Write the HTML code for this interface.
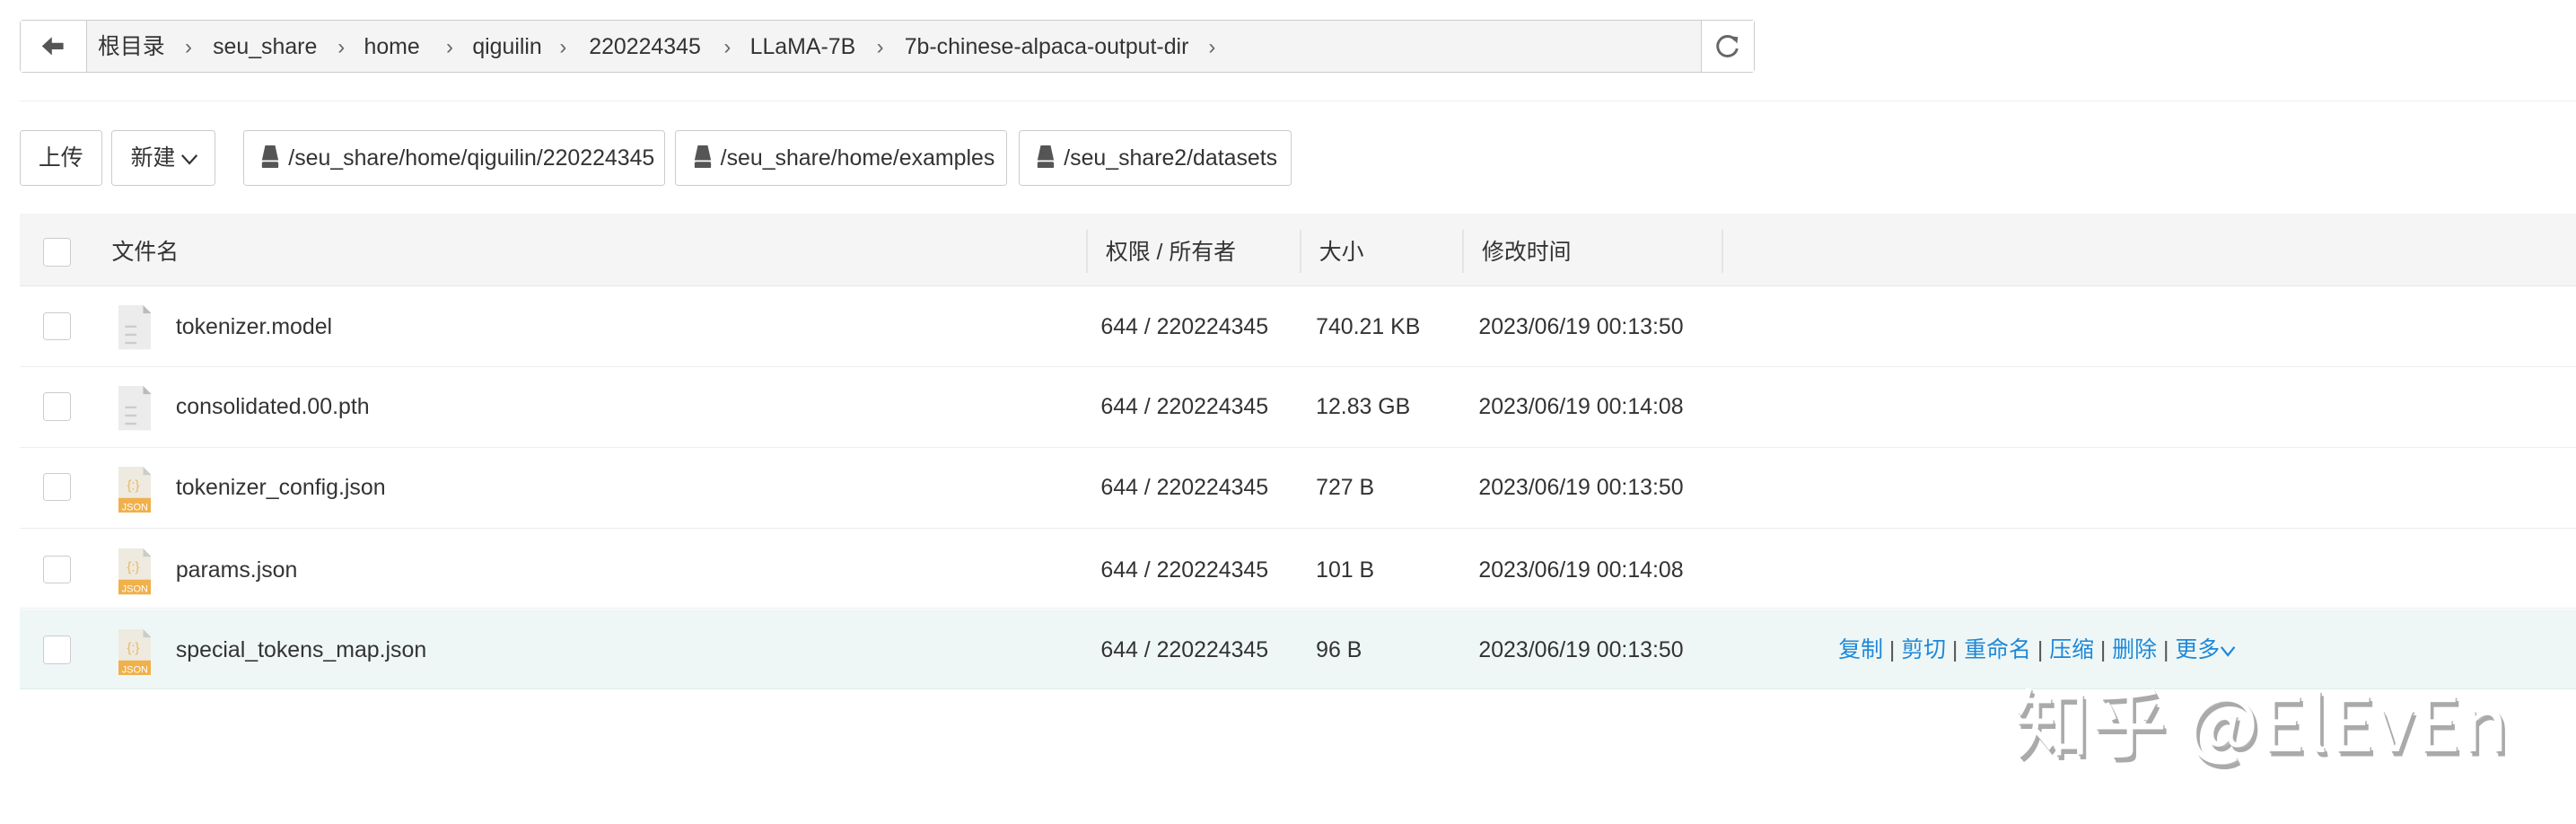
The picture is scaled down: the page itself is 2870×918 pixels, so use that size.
<!DOCTYPE html>
<html><head><meta charset="utf-8"><style>
html,body{margin:0;padding:0;background:#fff;overflow:hidden}
body{width:2870px;height:918px}
#w{zoom:1.8304;width:1568px;height:502px;position:relative;font-family:"Liberation Sans","Noto Sans CJK SC",sans-serif;color:#333;font-size:13.6px;line-height:16px}
.a{position:absolute}
.bc{left:12px;top:12px;width:1055px;height:31px;border:1px solid #ccc;background:#f4f4f4;border-radius:2px}
.bc span{position:absolute;top:8px;white-space:nowrap}
.gt{color:#666;font-size:13px}
.btn{top:79px;height:33px;border:1px solid #ccc;border-radius:2px;background:#fff;line-height:33px;white-space:nowrap}
.hd{left:12px;top:130px;width:1556px;height:44px;background:#f5f5f5;border-bottom:1px solid #e6e6e6}
.cb{width:16px;height:16px;border:1px solid #ccc;border-radius:2px;background:#fff}
.dv{top:140px;width:1px;height:26px;background:#e4e4e4}
.row{left:12px;width:1556px;height:48px;border-bottom:1px solid #eee}
</style></head><body><div id="w">
<div class="a bc">
 <div class="a" style="left:0;top:0;width:40px;height:31px;background:#fff;border-right:1px solid #ccc">
  <svg width="40" height="31"><path d="M13 15.5 L19 10 V13.5 H26 V17.5 H19 V21 Z" fill="#555"/></svg></div>
 <span style="left:47px">根目录</span><span class="gt" style="left:100px">›</span>
 <span style="left:117px">seu_share</span><span class="gt" style="left:193px">›</span>
 <span style="left:209px">home</span><span class="gt" style="left:259px">›</span>
 <span style="left:275px">qiguilin</span><span class="gt" style="left:328px">›</span>
 <span style="left:346px">220224345</span><span class="gt" style="left:428px">›</span>
 <span style="left:444px">LLaMA-7B</span><span class="gt" style="left:521px">›</span>
 <span style="left:538px">7b-chinese-alpaca-output-dir</span><span class="gt" style="left:723px">›</span>
 <div class="a" style="left:1023px;top:0;width:32px;height:31px;background:#fff;border-left:1px solid #ccc;box-sizing:border-box">
  <svg width="32" height="31"><path d="M20.5 12 A6 6 0 1 0 21.5 17" fill="none" stroke="#666" stroke-width="1.6"/><path d="M18 9.5 L22 10 L21.5 14 Z" fill="#666"/></svg></div>
</div>
<div class="a" style="left:12px;top:61px;width:1556px;height:1px;background:#eee"></div>
<div class="a btn" style="left:12px;width:49px;text-align:center">上传</div>
<div class="a btn" style="left:68px;width:62px"><span style="margin-left:11px">新建</span><svg width="11" height="7" style="margin-left:3px"><path d="M1 1 L5.5 6 L10 1" fill="none" stroke="#333" stroke-width="1.2"/></svg></div>
<div class="a btn" style="left:148px;width:256px"><svg width="12" height="14" style="margin:0 5px 0 10px;vertical-align:-2px"><path d="M3 0 H9 L11 9 H1 Z" fill="#555"/><rect x="1" y="10" width="10" height="4" rx="1" fill="#555"/></svg>/seu_share/home/qiguilin/220224345</div>
<div class="a btn" style="left:411px;width:201px"><svg width="12" height="14" style="margin:0 5px 0 10px;vertical-align:-2px"><path d="M3 0 H9 L11 9 H1 Z" fill="#555"/><rect x="1" y="10" width="10" height="4" rx="1" fill="#555"/></svg>/seu_share/home/examples</div>
<div class="a btn" style="left:620px;width:165px"><svg width="12" height="14" style="margin:0 5px 0 10px;vertical-align:-2px"><path d="M3 0 H9 L11 9 H1 Z" fill="#555"/><rect x="1" y="10" width="10" height="4" rx="1" fill="#555"/></svg>/seu_share2/datasets</div>
<div class="a hd"></div>
<div class="a cb" style="left:26px;top:145px"></div>
<div class="a" style="left:68px;top:146px">文件名</div>
<div class="a dv" style="left:661px"></div><div class="a" style="left:673px;top:146px">权限 / 所有者</div>
<div class="a dv" style="left:791px"></div><div class="a" style="left:803px;top:146px">大小</div>
<div class="a dv" style="left:890px"></div><div class="a" style="left:902px;top:146px">修改时间</div>
<div class="a dv" style="left:1048px"></div>

<div class="a row" style="top:175px"></div>
<div class="a row" style="top:224px"></div>
<div class="a row" style="top:273px"></div>
<div class="a row" style="top:322px"></div>
<div class="a row" style="top:371px;background:#eef7f6;border-bottom-color:#e0ecea"></div>

<div class="a cb" style="left:26px;top:190px"></div><div class="a cb" style="left:26px;top:239px"></div><div class="a cb" style="left:26px;top:288px"></div><div class="a cb" style="left:26px;top:338px"></div><div class="a cb" style="left:26px;top:387px"></div>

<svg class="a" style="left:72px;top:186px" width="20" height="27"><path d="M0 0 H15 L20 5 V27 H0 Z" fill="#ececec"/><path d="M15 0 L20 5 H15 Z" fill="#bbb"/><path d="M4 13 H11 M4 18 H11 M4 23 H11" stroke="#ccc" stroke-width="1.3"/></svg>
<svg class="a" style="left:72px;top:235px" width="20" height="27"><path d="M0 0 H15 L20 5 V27 H0 Z" fill="#ececec"/><path d="M15 0 L20 5 H15 Z" fill="#bbb"/><path d="M4 13 H11 M4 18 H11 M4 23 H11" stroke="#ccc" stroke-width="1.3"/></svg>
<svg class="a" style="left:72px;top:284px" width="20" height="28"><path d="M0 0 H15 L20 5 V28 H0 Z" fill="#eeeae0"/><path d="M15 0 L20 5 H15 Z" fill="#ccc"/><text x="9" y="14" font-size="8" fill="#e8b860" text-anchor="middle" font-family="Liberation Sans">{:}</text><rect x="0" y="19" width="20" height="9" fill="#f0b04a"/><text x="10" y="26.5" font-size="6" fill="#fff" text-anchor="middle" font-family="Liberation Sans">JSON</text></svg>
<svg class="a" style="left:72px;top:334px" width="20" height="28"><path d="M0 0 H15 L20 5 V28 H0 Z" fill="#eeeae0"/><path d="M15 0 L20 5 H15 Z" fill="#ccc"/><text x="9" y="14" font-size="8" fill="#e8b860" text-anchor="middle" font-family="Liberation Sans">{:}</text><rect x="0" y="19" width="20" height="9" fill="#f0b04a"/><text x="10" y="26.5" font-size="6" fill="#fff" text-anchor="middle" font-family="Liberation Sans">JSON</text></svg>
<svg class="a" style="left:72px;top:383px" width="20" height="28"><path d="M0 0 H15 L20 5 V28 H0 Z" fill="#eeeae0"/><path d="M15 0 L20 5 H15 Z" fill="#ccc"/><text x="9" y="14" font-size="8" fill="#e8b860" text-anchor="middle" font-family="Liberation Sans">{:}</text><rect x="0" y="19" width="20" height="9" fill="#f0b04a"/><text x="10" y="26.5" font-size="6" fill="#fff" text-anchor="middle" font-family="Liberation Sans">JSON</text></svg>

<div class="a" style="left:107px;top:191px">tokenizer.model</div><div class="a" style="left:670px;top:191px">644 / 220224345</div><div class="a" style="left:801px;top:191px">740.21 KB</div><div class="a" style="left:900px;top:191px">2023/06/19 00:13:50</div>
<div class="a" style="left:107px;top:240px">consolidated.00.pth</div><div class="a" style="left:670px;top:240px">644 / 220224345</div><div class="a" style="left:801px;top:240px">12.83 GB</div><div class="a" style="left:900px;top:240px">2023/06/19 00:14:08</div>
<div class="a" style="left:107px;top:289px">tokenizer_config.json</div><div class="a" style="left:670px;top:289px">644 / 220224345</div><div class="a" style="left:801px;top:289px">727 B</div><div class="a" style="left:900px;top:289px">2023/06/19 00:13:50</div>
<div class="a" style="left:107px;top:339px">params.json</div><div class="a" style="left:670px;top:339px">644 / 220224345</div><div class="a" style="left:801px;top:339px">101 B</div><div class="a" style="left:900px;top:339px">2023/06/19 00:14:08</div>
<div class="a" style="left:107px;top:388px">special_tokens_map.json</div><div class="a" style="left:670px;top:388px">644 / 220224345</div><div class="a" style="left:801px;top:388px">96 B</div><div class="a" style="left:900px;top:388px">2023/06/19 00:13:50</div>
<div class="a" style="left:1119px;top:388px;color:#1e88d8;white-space:nowrap">复制 <span style="color:#555">|</span> 剪切 <span style="color:#555">|</span> 重命名 <span style="color:#555">|</span> 压缩 <span style="color:#555">|</span> 删除 <span style="color:#555">|</span> 更多<svg width="10" height="7"><path d="M1 1 L5 6 L9 1" fill="none" stroke="#1e88d8" stroke-width="1.2"/></svg></div>
<div class="a" style="left:1226px;top:408px;font-size:46px;line-height:60px;color:#fff;text-shadow:2px 3px 0 #aaa,1px 1px 0 #bbb;font-family:'Noto Sans CJK SC','Liberation Sans',sans-serif;white-space:nowrap;letter-spacing:1px">知乎 @ElEvEn</div>
</div></body></html>
